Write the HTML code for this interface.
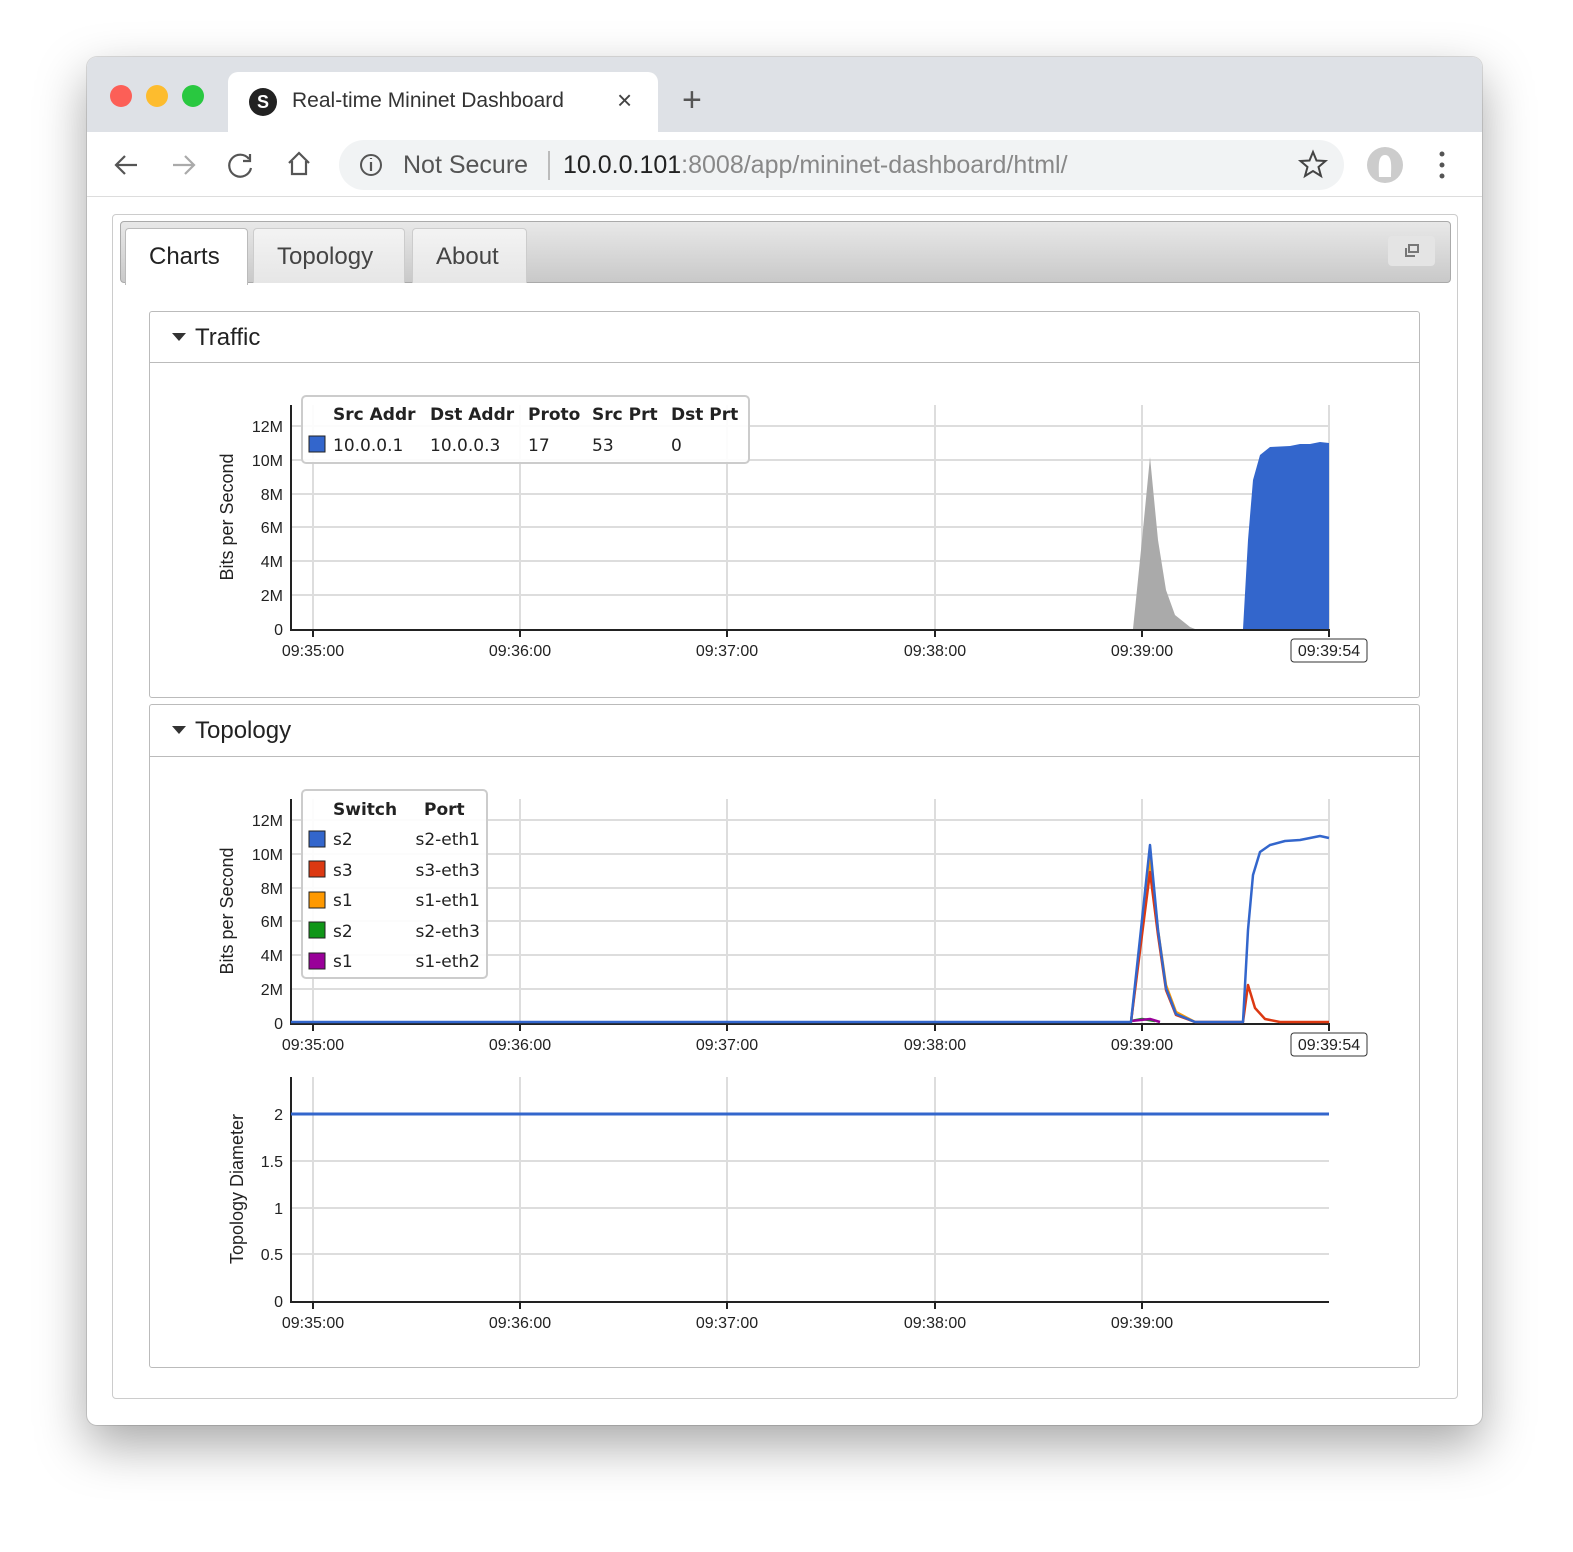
<!DOCTYPE html>
<html style="overflow:hidden"><head><meta charset="utf-8"><style>
*{margin:0;padding:0;box-sizing:border-box}
html,body{overflow:hidden}
body{width:1573px;height:1552px;background:#fff;position:relative;font-family:"Liberation Sans",Arial,sans-serif}
.abs{position:absolute}
.win{left:87px;top:57px;width:1395px;height:1368px;border-radius:10px;background:#fff;box-shadow:0 20px 50px rgba(0,0,0,.35),0 0 0 1px rgba(0,0,0,.12);overflow:hidden}
</style></head><body>
<div class="abs win">
 <div class="abs" style="left:0;top:0;width:1395px;height:75px;background:#dee1e6"></div>
 <div class="abs" style="left:23px;top:28px;width:22px;height:22px;border-radius:50%;background:#fc5f57"></div>
 <div class="abs" style="left:59px;top:28px;width:22px;height:22px;border-radius:50%;background:#fdbc2e"></div>
 <div class="abs" style="left:95px;top:28px;width:22px;height:22px;border-radius:50%;background:#29c840"></div>
 <div class="abs" style="left:141px;top:15px;width:430px;height:62px;background:#fff;border-radius:10px 10px 0 0"></div>
 <div class="abs" style="left:162px;top:31px;width:28px;height:28px;border-radius:50%;background:#222;color:#fff;font-weight:bold;font-size:18px;text-align:center;line-height:28px">S</div>
 <div class="abs" style="left:205px;top:32px;font-size:21px;color:#333">Real-time Mininet Dashboard</div>
 <div class="abs" style="left:530px;top:28px;font-size:26px;color:#444">×</div>
 <div class="abs" style="left:595px;top:24px;font-size:34px;color:#555;font-weight:300">+</div>
 <div class="abs" style="left:0;top:139px;width:1395px;height:1px;background:#ddd"></div>
 <svg class="abs" style="left:0;top:75px" width="1395" height="64">
  <g fill="none" stroke="#555" stroke-width="2.2">
   <path d="M50 33H29M38 24l-9 9 9 9"/>
   <path d="M86 33h21M98 24l9 9-9 9" stroke="#aaa"/>
   <path d="M162 27a11 11 0 1 0 2 9"/><path d="M163 22v7h-7" />
   <path d="M202 31l10-10 10 10M205 29v13h14V29"/>
  </g>
  <rect x="252" y="8" width="1005" height="50" rx="25" fill="#f1f3f4"/>
  <circle cx="284" cy="33" r="10" fill="none" stroke="#555" stroke-width="2"/>
  <path d="M284 30v9M284 26v1" stroke="#555" stroke-width="2.2"/>
  <rect x="461" y="19" width="2" height="29" fill="#bbb"/>
  <path d="M1226 20l3.5 8.5 9 .5-7 6 2.5 9-8-5-8 5 2.5-9-7-6 9-.5z" fill="none" stroke="#444" stroke-width="2"/>
  <circle cx="1298" cy="33" r="18" fill="#ccc"/><path d="M1292 45c0-8-2-22 6-22s6 14 6 22z" fill="#fff"/>
  <circle cx="1355" cy="22" r="2.5" fill="#555"/><circle cx="1355" cy="33" r="2.5" fill="#555"/><circle cx="1355" cy="44" r="2.5" fill="#555"/>
 </svg>
 <div class="abs" style="left:316px;top:94px;font-size:25px;color:#555">Not Secure</div>
 <div class="abs" style="left:476px;top:94px;font-size:25px;color:#222">10.0.0.101<span style="color:#888">:8008/app/mininet-dashboard/html/</span></div>
 <div class="abs" style="left:25px;top:157px;width:1346px;height:1185px;border:1px solid #ccc;border-radius:4px"></div>
 <div class="abs" style="left:33px;top:164px;width:1331px;height:62px;border:1px solid #aaa;border-radius:4px;background:linear-gradient(#e8e8e8,#c9c9c9)"></div>
 <div class="abs" style="left:38px;top:171px;width:123px;height:57px;background:#fff;border:1px solid #bbb;border-bottom:none;border-radius:4px 4px 0 0;font-size:24px;color:#222;padding:14px 0 0 23px">Charts</div>
 <div class="abs" style="left:166px;top:171px;width:152px;height:55px;background:linear-gradient(#f3f3f3,#e6e6e6);border:1px solid #ccc;border-bottom:none;border-radius:4px 4px 0 0;font-size:24px;color:#444;padding:14px 0 0 23px">Topology</div>
 <div class="abs" style="left:325px;top:171px;width:115px;height:55px;background:linear-gradient(#f3f3f3,#e6e6e6);border:1px solid #ccc;border-bottom:none;border-radius:4px 4px 0 0;font-size:24px;color:#444;padding:14px 0 0 23px">About</div>
 <div class="abs" style="left:1301px;top:179px;width:47px;height:30px;background:#e4e4e4;border-radius:4px"></div>
 <svg class="abs" style="left:1317px;top:186px" width="16" height="16"><rect x="5" y="2" width="9" height="7" fill="none" stroke="#777" stroke-width="2"/><path d="M2 5v8h9" fill="none" stroke="#777" stroke-width="2"/></svg>
 <div class="abs" style="left:62px;top:254px;width:1271px;height:387px;border:1px solid #bbb;border-radius:3px"></div>
 <div class="abs" style="left:62px;top:305px;width:1271px;height:1px;background:#bbb"></div>
 <div class="abs" style="left:62px;top:647px;width:1271px;height:664px;border:1px solid #bbb;border-radius:3px"></div>
 <div class="abs" style="left:62px;top:699px;width:1271px;height:1px;background:#bbb"></div>
 <div class="abs" style="left:108px;top:267px;font-size:24px;color:#222">Traffic</div>
 <div class="abs" style="left:108px;top:660px;font-size:24px;color:#222">Topology</div>
</div>
<svg class="abs" style="left:0;top:0" width="1573" height="1552" font-family="Liberation Sans, Arial, sans-serif">
 <path d="M172 333h14l-7 8z M172 726h14l-7 8z" fill="#333"/>
 <g stroke="#ddd" stroke-width="2">
  <path d="M291 595H1329M291 561H1329M291 527H1329M291 494H1329M291 460H1329M291 426H1329"/>
  <path d="M313 405V629M520 405V629M727 405V629M935 405V629M1142 405V629M1329 405V629"/>
  <path d="M291 989H1329M291 955H1329M291 921H1329M291 888H1329M291 854H1329M291 820H1329"/>
  <path d="M313 799V1023M520 799V1023M727 799V1023M935 799V1023M1142 799V1023M1329 799V1023"/>
  <path d="M291 1254H1329M291 1208H1329M291 1161H1329M291 1114H1329"/>
  <path d="M313 1077V1301M520 1077V1301M727 1077V1301M935 1077V1301M1142 1077V1301"/>
 </g>
 <path d="M1133 629L1142 540L1150 457L1158 540L1166 590L1175 615L1190 627L1195 629Z" fill="#aaa"/>
 <path d="M1243 629L1248 540L1253 480L1260 455L1270 447L1290 446L1300 444L1310 444L1320 442L1329 443V629Z" fill="#3366cc"/>
 <g stroke="#222" stroke-width="2" fill="none"><path d="M291 405V630H1329M313 629v8M520 629v8M727 629v8M935 629v8M1142 629v8M1329 629v8"/>
 <path d="M291 799V1024H1329M313 1023v8M520 1023v8M727 1023v8M935 1023v8M1142 1023v8M1329 1023v8"/>
 <path d="M291 1077V1302H1329M313 1301v8M520 1301v8M727 1301v8M935 1301v8M1142 1301v8"/></g>
 <g font-size="16" fill="#222" text-anchor="end">
  <text x="283" y="635">0</text><text x="283" y="601">2M</text><text x="283" y="567">4M</text><text x="283" y="533">6M</text><text x="283" y="500">8M</text><text x="283" y="466">10M</text><text x="283" y="432">12M</text>
  <text x="283" y="1029">0</text><text x="283" y="995">2M</text><text x="283" y="961">4M</text><text x="283" y="927">6M</text><text x="283" y="894">8M</text><text x="283" y="860">10M</text><text x="283" y="826">12M</text>
  <text x="283" y="1307">0</text><text x="283" y="1260">0.5</text><text x="283" y="1214">1</text><text x="283" y="1167">1.5</text><text x="283" y="1120">2</text>
 </g>
 <g font-size="16" fill="#222" text-anchor="middle">
  <text x="313" y="656">09:35:00</text><text x="520" y="656">09:36:00</text><text x="727" y="656">09:37:00</text><text x="935" y="656">09:38:00</text><text x="1142" y="656">09:39:00</text>
  <text x="313" y="1050">09:35:00</text><text x="520" y="1050">09:36:00</text><text x="727" y="1050">09:37:00</text><text x="935" y="1050">09:38:00</text><text x="1142" y="1050">09:39:00</text>
  <text x="313" y="1328">09:35:00</text><text x="520" y="1328">09:36:00</text><text x="727" y="1328">09:37:00</text><text x="935" y="1328">09:38:00</text><text x="1142" y="1328">09:39:00</text>
  <text x="1329" y="656">09:39:54</text><text x="1329" y="1050">09:39:54</text>
 </g>
 <rect x="1291" y="639" width="76" height="23" rx="3" fill="none" stroke="#333"/>
 <rect x="1291" y="1033" width="76" height="23" rx="3" fill="none" stroke="#333"/>
 <g font-size="18" fill="#222" text-anchor="middle">
  <text transform="translate(233 517) rotate(-90)">Bits per Second</text>
  <text transform="translate(233 911) rotate(-90)">Bits per Second</text>
  <text transform="translate(243 1189) rotate(-90)">Topology Diameter</text>
 </g>
 <g fill="none" stroke-width="2.5" stroke-linejoin="round">
  <path d="M1131 1021L1142 1019L1155 1021" stroke="#109618"/>
  <path d="M1131 1021L1150 1019L1160 1022" stroke="#990099"/>
  <path d="M1131 1022L1142 930L1150 858L1158 930L1166 985L1176 1012L1195 1022" stroke="#ff9900"/>
  <path d="M1131 1022L1142 935L1150 872L1158 935L1166 990L1176 1015L1195 1022H1243L1248 985L1255 1008L1265 1019L1280 1022H1329" stroke="#dc3912"/>
  <path d="M291 1022H1131L1142 920L1150 845L1158 930L1166 988L1176 1014L1195 1022H1243L1248 930L1253 875L1260 852L1270 845L1285 841L1300 840L1310 838L1320 836L1329 838" stroke="#3366cc"/>
  <path d="M291 1114H1329" stroke="#3366cc" stroke-width="3"/>
 </g>
 <rect x="302" y="396" width="447" height="67" rx="4" fill="#fff" fill-opacity=".9" stroke="#ccc" stroke-width="2"/>
 <g font-family="DejaVu Sans, Verdana, sans-serif" font-size="17" fill="#222">
  <g font-weight="bold"><text x="333" y="420">Src Addr</text><text x="430" y="420">Dst Addr</text><text x="528" y="420">Proto</text><text x="592" y="420">Src Prt</text><text x="671" y="420">Dst Prt</text></g>
  <rect x="309" y="436" width="16" height="16" fill="#3366cc" stroke="#222"/>
  <text x="333" y="451">10.0.0.1</text><text x="430" y="451">10.0.0.3</text><text x="528" y="451">17</text><text x="592" y="451">53</text><text x="671" y="451">0</text>
 </g>
 <rect x="302" y="790" width="185" height="188" rx="4" fill="#fff" fill-opacity=".9" stroke="#ccc" stroke-width="2"/>
 <g font-family="DejaVu Sans, Verdana, sans-serif" font-size="17" fill="#222">
  <g font-weight="bold"><text x="333" y="815">Switch</text><text x="424" y="815">Port</text></g>
  <rect x="309" y="831" width="16" height="16" fill="#3366cc" stroke="#222"/><text x="333" y="845">s2</text><text x="480" y="845" text-anchor="end">s2-eth1</text>
  <rect x="309" y="861" width="16" height="16" fill="#dc3912" stroke="#222"/><text x="333" y="876">s3</text><text x="480" y="876" text-anchor="end">s3-eth3</text>
  <rect x="309" y="892" width="16" height="16" fill="#ff9900" stroke="#222"/><text x="333" y="906">s1</text><text x="480" y="906" text-anchor="end">s1-eth1</text>
  <rect x="309" y="922" width="16" height="16" fill="#109618" stroke="#222"/><text x="333" y="937">s2</text><text x="480" y="937" text-anchor="end">s2-eth3</text>
  <rect x="309" y="953" width="16" height="16" fill="#990099" stroke="#222"/><text x="333" y="967">s1</text><text x="480" y="967" text-anchor="end">s1-eth2</text>
 </g>
</svg>
</body></html>
